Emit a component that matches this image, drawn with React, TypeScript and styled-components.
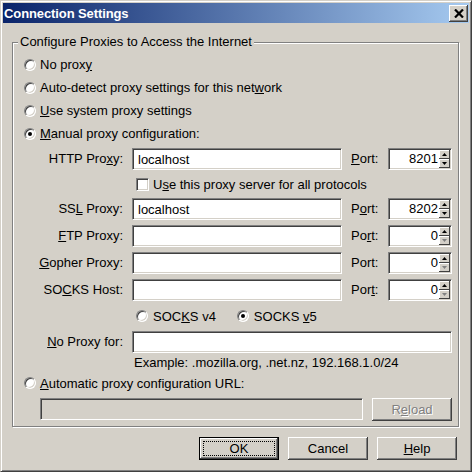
import React from 'react'
import styled, { createGlobalStyle, css } from 'styled-components'

const face = '#d4d0c8'
const shadow = '#808080'
const darkShadow = '#404040'

const GlobalStyle = createGlobalStyle`
  body {
    margin: 0;
    background: #ffffff;
    font-family: "Liberation Sans", Arial, sans-serif;
    font-size: 13px;
    color: #000;
  }
`

interface PortRow {
  label: React.ReactNode
  value: string
  port: React.ReactNode
  portValue: number
}

const proxyRows: PortRow[] = [
  { label: <>SS<u>L</u> Proxy:</>, value: 'localhost', port: <>P<u>o</u>rt:</>, portValue: 8202 },
  { label: <><u>F</u>TP Proxy:</>, value: '', port: <>Po<u>r</u>t:</>, portValue: 0 },
  { label: <><u>G</u>opher Proxy:</>, value: '', port: <>Port:</>, portValue: 0 },
  { label: <>SO<u>C</u>KS Host:</>, value: '', port: <>Por<u>t</u>:</>, portValue: 0 },
]

const PortField = ({ value }: { value: number }) => (
  <PortBox>
    <PortValue>{value}</PortValue>
    <Spinner>
      <SpinButton>
        <Arrow up />
      </SpinButton>
      <SpinButton>
        <Arrow disabled={value === 0} />
      </SpinButton>
    </Spinner>
  </PortBox>
)

const Arrow = ({ up, disabled }: { up?: boolean; disabled?: boolean }) => (
  <svg width="5" height="3" viewBox="0 0 5 3">
    <polygon
      points={up ? '2.5,0 5,3 0,3' : '0,0 5,0 2.5,3'}
      fill={disabled ? shadow : '#000'}
    />
  </svg>
)

const App = () => {
  return (
    <>
      <GlobalStyle />
      <Window>
        <TitleBar>
          <Title>Connection Settings</Title>
          <CloseButton>
            <svg width="10" height="9" viewBox="0 0 10 9">
              <path d="M1 0.5 L9 8.5 M9 0.5 L1 8.5" stroke="#000" strokeWidth="2.2" />
            </svg>
          </CloseButton>
        </TitleBar>

        <Content>
          <GroupFrame>
            <GroupTitle>Configure Proxies to Access the Internet</GroupTitle>
            <GroupBody>
              <RadioRow>
                <Radio />
                <span>No prox<u>y</u></span>
              </RadioRow>
              <RadioRow>
                <Radio />
                <span>Auto-detect proxy settings for this net<u>w</u>ork</span>
              </RadioRow>
              <RadioRow>
                <Radio />
                <span><u>U</u>se system proxy settings</span>
              </RadioRow>
              <RadioRow>
                <Radio checked />
                <span><u>M</u>anual proxy configuration:</span>
              </RadioRow>

              <ProxyGrid>
                <FieldLabel>HTTP Pro<u>x</u>y:</FieldLabel>
                <TextBox value="localhost" readOnly />
                <PortLabel><u>P</u>ort:</PortLabel>
                <PortField value={8201} />

                <CheckRow>
                  <CheckBox />
                  <span>U<u>s</u>e this proxy server for all protocols</span>
                </CheckRow>

                {proxyRows.map((row, i) => (
                  <React.Fragment key={i}>
                    <FieldLabel>{row.label}</FieldLabel>
                    <TextBox value={row.value} readOnly />
                    <PortLabel>{row.port}</PortLabel>
                    <PortField value={row.portValue} />
                  </React.Fragment>
                ))}

                <SocksRow>
                  <SocksOption>
                    <Radio />
                    <span>SOC<u>K</u>S v4</span>
                  </SocksOption>
                  <SocksOption>
                    <Radio checked />
                    <span>SOCKS <u>v</u>5</span>
                  </SocksOption>
                </SocksRow>

                <FieldLabel><u>N</u>o Proxy for:</FieldLabel>
                <TextBox wide value="" readOnly />
              </ProxyGrid>

              <Hint>Example: .mozilla.org, .net.nz, 192.168.1.0/24</Hint>

              <RadioRow last>
                <Radio />
                <span><u>A</u>utomatic proxy configuration URL:</span>
              </RadioRow>

              <UrlRow>
                <TextBox disabled value="" readOnly />
                <Button disabled>R<u>e</u>load</Button>
              </UrlRow>
            </GroupBody>
          </GroupFrame>

          <ButtonRow>
            <Button primary>
              <Focus>OK</Focus>
            </Button>
            <Button>Cancel</Button>
            <Button><u>H</u>elp</Button>
          </ButtonRow>
        </Content>
      </Window>
    </>
  )
}

const Window = styled.div`
  width: 472px;
  height: 472px;
  box-sizing: border-box;
  display: flex;
  flex-direction: column;
  padding: 2px;
  background: ${face};
  border: 1px solid;
  border-color: ${face} ${darkShadow} ${darkShadow} ${face};
  box-shadow: inset 1px 1px 0 #fff, inset -1px -1px 0 ${shadow};
`

const TitleBar = styled.div`
  height: 20px;
  flex: none;
  display: flex;
  align-items: center;
  justify-content: space-between;
  padding: 0 1px 0 1px;
  background: linear-gradient(to right, #0a246a, #a6caf0);
`

const Title = styled.span`
  color: #fff;
  font-weight: bold;
  font-size: 13px;
  letter-spacing: -0.1px;
`

const bevel = css`
  background: ${face};
  border: none;
  box-shadow:
    inset -1px -1px 0 ${darkShadow},
    inset 1px 1px 0 #fff,
    inset -2px -2px 0 ${shadow},
    inset 2px 2px 0 ${face};
`

const CloseButton = styled.div`
  ${bevel};
  width: 19px;
  height: 17px;
  display: flex;
  align-items: center;
  justify-content: center;
`

const Content = styled.div`
  flex: 1;
  display: flex;
  flex-direction: column;
  padding: 19px 10px 9px 9px;
`

const GroupFrame = styled.div`
  border: 1px solid ${shadow};
  box-shadow: inset 1px 1px 0 #fff, 1px 1px 0 #fff;
`

const GroupTitle = styled.div`
  width: fit-content;
  margin: -9px 0 0 5px;
  padding: 0 2px;
  line-height: 16px;
  background: ${face};
`

const GroupBody = styled.div`
  padding: 3px 6px 5px 11px;
`

const RadioRow = styled.label<{ last?: boolean }>`
  display: flex;
  align-items: center;
  gap: 4px;
  height: ${(p) => (p.last ? 22 : 23)}px;
`

const sunken = css`
  border: 1px solid;
  border-color: ${shadow} #fff #fff ${shadow};
  box-shadow: inset 1px 1px 0 ${darkShadow}, inset -1px -1px 0 ${face};
`

const Radio = styled.span<{ checked?: boolean }>`
  ${sunken};
  box-sizing: border-box;
  width: 12px;
  height: 12px;
  flex: none;
  border-radius: 50%;
  background: #fff;
  display: grid;
  place-items: center;

  ${(p) => p.checked && css`
    &::after {
      content: '';
      width: 4px;
      height: 4px;
      border-radius: 50%;
      background: #000;
    }
  `}
`

const CheckBox = styled.span`
  ${sunken};
  box-sizing: border-box;
  width: 13px;
  height: 13px;
  flex: none;
  background: #fff;
`

const ProxyGrid = styled.div`
  display: grid;
  grid-template-columns: 99px 210px 28px 1fr;
  grid-template-rows: 22px 18px 22px 22px 22px 22px 20px 22px;
  column-gap: 9px;
  row-gap: 5px;
  margin-top: 3px;
`

const FieldLabel = styled.div`
  line-height: 22px;
  text-align: right;
  white-space: nowrap;
`

const PortLabel = styled.div`
  line-height: 22px;
  white-space: nowrap;
`

const TextBox = styled.input<{ wide?: boolean }>`
  ${sunken};
  box-sizing: border-box;
  height: 22px;
  min-width: 0;
  margin: 0;
  padding: 0 4px 0 5px;
  font: inherit;
  color: #000;
  background: ${(p) => (p.disabled ? face : '#fff')};
  outline: none;
  ${(p) => p.wide && css`
    grid-column: 2 / -1;
  `}
`

const PortBox = styled.div`
  ${sunken};
  box-sizing: border-box;
  height: 22px;
  display: flex;
  align-items: stretch;
  background: #fff;
  padding: 1px;
`

const PortValue = styled.span`
  flex: 1;
  line-height: 18px;
  text-align: right;
  padding-right: 1px;
`

const Spinner = styled.div`
  width: 11px;
  display: flex;
  flex-direction: column;
`

const SpinButton = styled.div`
  flex: 1;
  display: flex;
  align-items: center;
  justify-content: center;
  background: ${face};
  box-shadow:
    inset -1px -1px 0 ${darkShadow},
    inset 1px 1px 0 #fff;
`

const CheckRow = styled.label`
  grid-column: 2 / -1;
  display: flex;
  align-items: center;
  gap: 4px;
  padding-left: 4px;
`

const SocksRow = styled.div`
  grid-column: 2 / -1;
  display: flex;
  align-items: center;
  gap: 21px;
  padding-left: 4px;
`

const SocksOption = styled.label`
  display: flex;
  align-items: center;
  gap: 5px;
`

const Hint = styled.div`
  height: 18px;
  line-height: 18px;
  margin-top: 1px;
  padding-left: 110px;
`

const UrlRow = styled.div`
  display: flex;
  align-items: flex-start;
  gap: 9px;
  margin-top: 4px;
  padding-left: 16px;

  & > input {
    flex: 1;
  }
`

const Button = styled.button<{ primary?: boolean }>`
  ${bevel};
  box-sizing: border-box;
  display: block;
  width: 80px;
  height: 23px;
  margin: 0;
  padding: 0;
  font: inherit;
  line-height: 21px;
  text-align: center;
  color: #000;

  ${(p) => p.disabled && css`
    color: ${shadow};
    text-shadow: 1px 1px 0 #fff;
  `}

  ${(p) => p.primary && css`
    border: 1px solid #000;
    padding: 3px;
  `}
`

const Focus = styled.span`
  display: block;
  box-sizing: border-box;
  height: 15px;
  line-height: 13px;
  border: 1px dotted #000;
`

const ButtonRow = styled.div`
  display: flex;
  justify-content: flex-end;
  gap: 9px;
  margin-top: 10px;
  padding-right: 2px;
`

export default App
